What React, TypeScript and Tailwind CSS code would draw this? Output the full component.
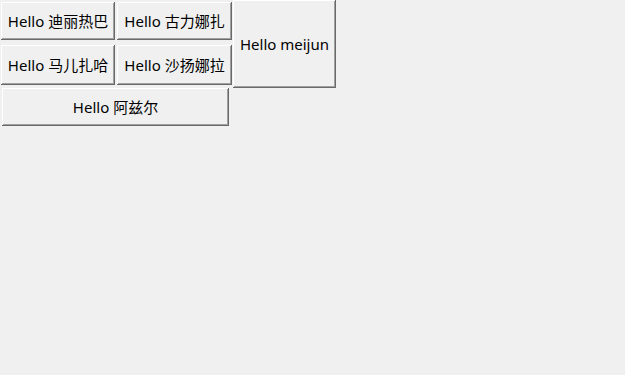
import React from "react";

const btn =
  "flex items-center justify-center bg-[#f0f0f0] text-[15px] text-black leading-none shadow-[inset_-1px_-1px_#696969,inset_1px_1px_#ffffff,inset_-2px_-2px_#a0a0a0,inset_2px_2px_#f0f0f0]";

export default function App() {
  return (
    <div
      className="w-[625px] h-[375px] bg-[#f0f0f0] overflow-hidden"
      style={{ fontFamily: '"Noto Sans", "Noto Sans CJK SC", sans-serif' }}
    >
      <div className="grid grid-cols-[116px_116px_105px] grid-rows-[43px_44px_41px]">
        <div className={`${btn} ml-[1px] mt-[2px] w-[114px] h-[38px]`}>Hello 迪丽热巴</div>
        <div className={`${btn} ml-[1px] mt-[2px] w-[115px] h-[38px]`}>Hello 古力娜扎</div>
        <div className={`${btn} row-span-2 ml-[1px] w-[103px] h-[88px]`}>Hello meijun</div>
        <div className={`${btn} ml-[1px] mt-[2px] w-[114px] h-[40px]`}>Hello 马儿扎哈</div>
        <div className={`${btn} ml-[1px] mt-[2px] w-[115px] h-[40px]`}>Hello 沙扬娜拉</div>
        <div className={`${btn} col-span-2 ml-[2px] mt-[1px] w-[227px] h-[38px]`}>Hello 阿兹尔</div>
      </div>
    </div>
  );
}
